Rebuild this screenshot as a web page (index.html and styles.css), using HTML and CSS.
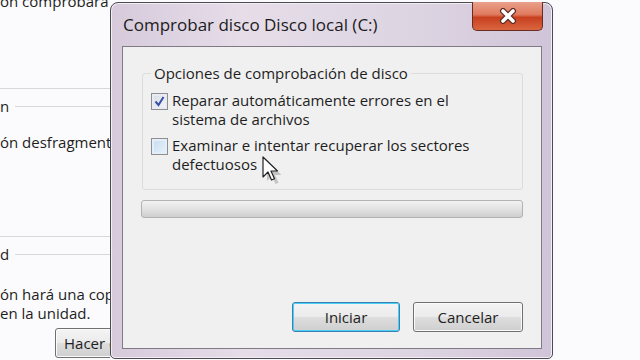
FILE: index.html
```html
<!DOCTYPE html>
<html lang="es">
<head>
    <meta charset="UTF-8">
    <title>Comprobar disco Disco local (C:)</title>
    <link rel="stylesheet" href="styles.css">
</head>
<body>
    <div class="sheet">
        <p class="line first">ón comprobará si hay errores en</p>
        <div class="rule"></div>
        <div class="group-head"><span>n</span></div>
        <p class="line">ón desfragmentará la unidad.</p>
        <div class="rule second"></div>
        <div class="group-head"><span>d</span></div>
        <p class="line tight">ón hará una copia de seguridad</p>
        <p class="line">en la unidad.</p>
        <button class="btn old">Hacer copia de seguridad</button>
    </div>

    <div class="window">
        <div class="titlebar">
            <span class="title">Comprobar disco Disco local (C:)</span>
            <div class="close">
                <svg width="24" height="16" viewBox="0 0 24 16">
                    <path d="M7 3 L17 13 M17 3 L7 13" stroke="#5a2a20" stroke-width="6" stroke-linecap="round"/>
                    <path d="M7 3 L17 13 M17 3 L7 13" stroke="#ffffff" stroke-width="3.6" stroke-linecap="round"/>
                </svg>
            </div>
        </div>
        <div class="client">
            <fieldset class="options">
                <legend>Opciones de comprobación de disco</legend>
                <label class="check">
                    <span class="box checked">
                        <svg width="13" height="13" viewBox="0 0 13 13">
                            <path d="M2.5 6.5 L5.5 10 L10.5 2" fill="none" stroke="#3a4fa8" stroke-width="2"/>
                        </svg>
                    </span>
                    <span>Reparar automáticamente errores en el<br>sistema de archivos</span>
                </label>
                <label class="check">
                    <span class="box"></span>
                    <span>Examinar e intentar recuperar los sectores<br>defectuosos</span>
                </label>
            </fieldset>
            <div class="progress"></div>
            <div class="actions">
                <button class="btn focus">Iniciar</button>
                <button class="btn">Cancelar</button>
            </div>
        </div>
    </div>

    <svg class="cursor" width="24" height="30" viewBox="0 0 24 30">
        <path d="M3 3 L3 23 L8 18 L11.5 26 L14.5 24.7 L11 17 L17.5 17 Z" fill="#000" opacity="0.18" transform="translate(2 2)"/>
        <path d="M1 1 L1 21 L6 16 L9.5 24 L12.5 22.7 L9 15 L15.5 15 Z" fill="#fff" stroke="#222" stroke-width="1.2" stroke-linejoin="round"/>
    </svg>
</body>
</html>
```

FILE: styles.css
```css
body {
    margin: 0;
    width: 640px;
    height: 360px;
    overflow: hidden;
    position: relative;
    background-color: #fbfbfd;
    font-family: "Open Sans", "Noto Sans", sans-serif;
    font-size: 15px;
    color: #1e1e1e;
}
.sheet {
    width: 110px;
    overflow: hidden;
    white-space: nowrap;
}
.line {
    margin: 0;
    line-height: 19px;
}
.line.first {
    margin-top: -8px;
}
.rule {
    height: 1px;
    width: 120px;
    background-color: #d8d8d8;
    margin-top: 77px;
}
.rule.second {
    margin-top: 84px;
}
.group-head {
    display: flex;
    align-items: center;
    gap: 6px;
    line-height: 19px;
    margin: 8px 0 17px;
}
.group-head::after {
    content: "";
    flex: 1;
    height: 1px;
    background-color: #d8d8d8;
}
.tight {
    margin-top: 21px;
}
.btn {
    font-family: inherit;
    font-size: 15px;
    color: #1e1e1e;
    height: 30px;
    border: 1px solid #707070;
    border-radius: 3px;
    background: linear-gradient(#f4f4f4 0%, #ebebeb 48%, #dddddd 52%, #cfcfcf 100%);
    box-shadow: inset 0 0 0 1px #fbfbfb;
    padding: 0;
}
.btn.old {
    margin: 5px 0 0 55px;
    padding: 0 8px;
    text-align: left;
}
.window {
    position: absolute;
    left: 110px;
    top: 2px;
    width: 441px;
    height: 355px;
    border: 1px solid #4e4a54;
    border-radius: 8px 8px 5px 5px;
    background: linear-gradient(90deg, #d6cadb 0%, #e6dde9 30%, #ddd4e2 70%, #d0c4d8 100%);
    box-shadow: inset 0 0 0 1px #f2eef4;
    display: flex;
    flex-direction: column;
}
.titlebar {
    height: 43px;
    display: flex;
    align-items: flex-start;
    justify-content: space-between;
    padding-left: 12px;
}
.title {
    margin-top: 10px;
    font-size: 17px;
    color: #1b1b1b;
}
.close {
    width: 69px;
    height: 28px;
    margin: -1px 9px 0 0;
    border: 1px solid #6a2c22;
    border-top: none;
    border-radius: 0 0 5px 5px;
    background: linear-gradient(#e9a08a 0%, #df7a5e 45%, #c8401f 55%, #d9663f 100%);
    display: flex;
    align-items: center;
    justify-content: center;
}
.client {
    flex: 1;
    margin: 0 10px 9px 11px;
    border: 1px solid #7f7a86;
    background-color: #f0f0f0;
    display: flex;
    flex-direction: column;
    padding: 0 18px 16px 18px;
}
.options {
    margin: 17px 0 0 1px;
    height: 115px;
    border: 1px solid #dcdcdc;
    border-radius: 3px;
    padding: 9px 0 0 8px;
}
.options legend {
    padding: 0 3px;
    margin-left: 0;
    line-height: 18px;
}
.check {
    display: flex;
    align-items: flex-start;
    gap: 4px;
    line-height: 19px;
    margin-bottom: 7px;
}
.box {
    width: 15px;
    height: 15px;
    margin-top: 2px;
    border: 1px solid #8e8f8f;
    background: linear-gradient(135deg, #c4dcf0, #eaf3fb);
    box-shadow: inset 0 0 0 2px #e3eef8;
    display: flex;
    align-items: center;
    justify-content: center;
}
.box.checked {
    background: linear-gradient(135deg, #d6dde8, #f4f6fa);
    box-shadow: inset 0 0 0 2px #e8ecf2;
}
.progress {
    margin-top: 10px;
    height: 16px;
    border: 1px solid #b2b2b2;
    border-radius: 3px;
    background: linear-gradient(#f2f2f2 0%, #e2e2e2 50%, #cfcfcf 100%);
}
.actions {
    margin-top: auto;
    display: flex;
    justify-content: flex-end;
    gap: 13px;
}
.actions .btn {
    width: 110px;
}
.actions .btn.focus {
    width: 108px;
    border-color: #3c7fb1;
    box-shadow: inset 0 0 0 1px #48d1f7;
}
.cursor {
    position: absolute;
    left: 262px;
    top: 156px;
}
```
